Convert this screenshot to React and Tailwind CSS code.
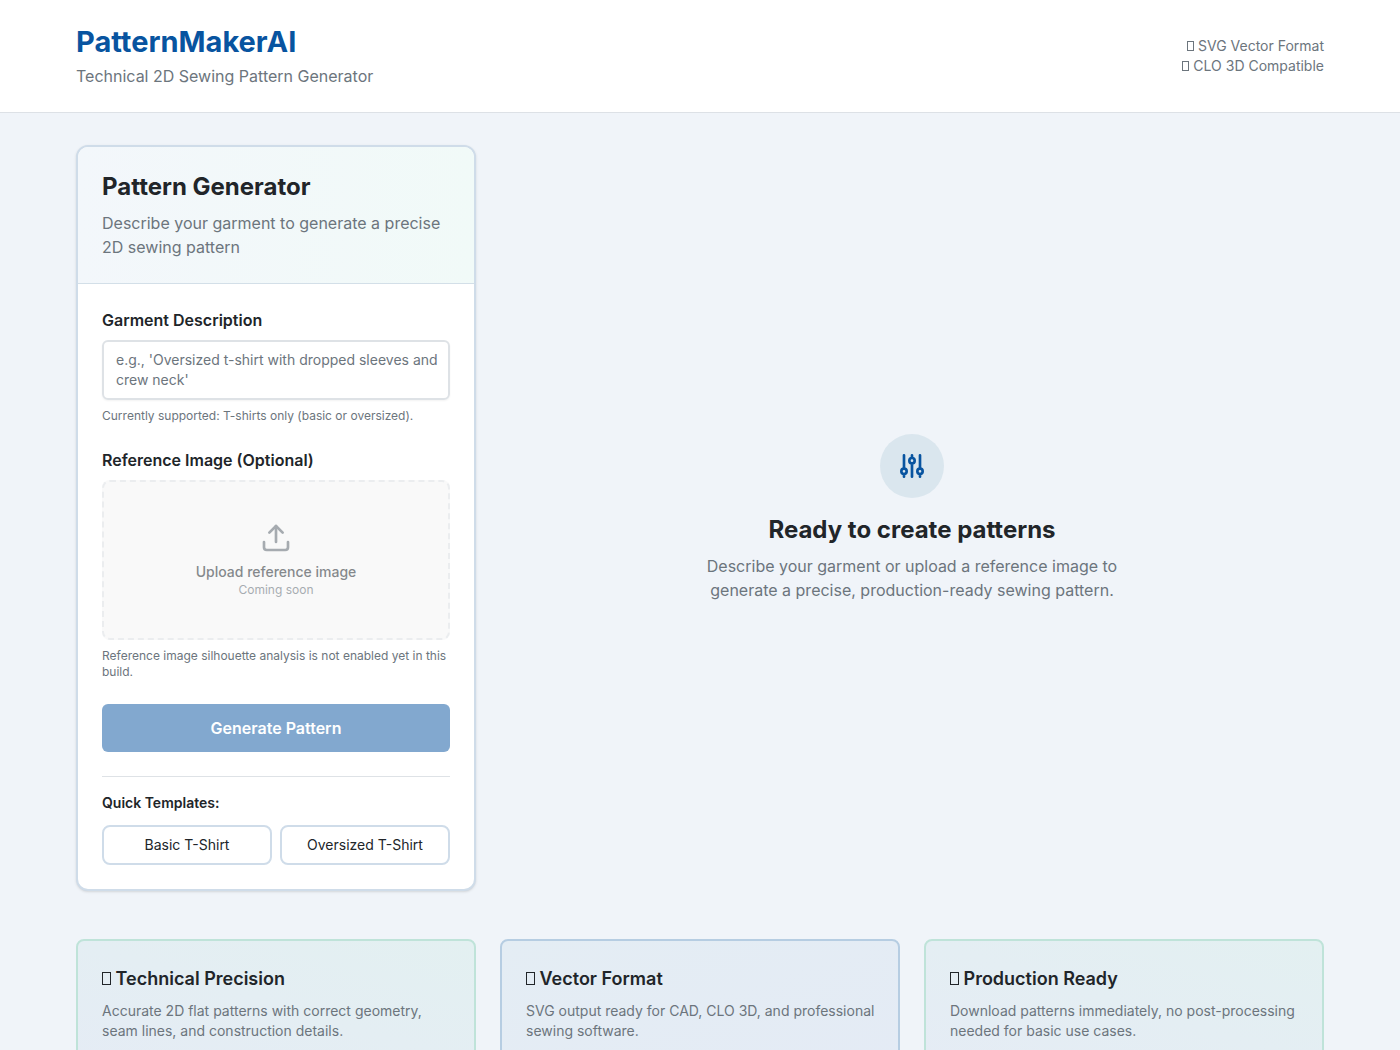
import React, { useState } from 'react';
import { Upload } from 'lucide-react';

const templates = [
  { name: 'Basic T-Shirt', prompt: 'Basic t-shirt with crew neck' },
  { name: 'Oversized T-Shirt', prompt: 'Oversized t-shirt with dropped sleeves and crew neck' },
];

const features = [
  {
    title: 'Technical Precision',
    text: 'Accurate 2D flat patterns with correct geometry, seam lines, and construction details.',
    style: 'border-[#bfe3d9] bg-linear-to-bl from-[#e3f0f1] to-[#e5ecf5]',
  },
  {
    title: 'Vector Format',
    text: 'SVG output ready for CAD, CLO 3D, and professional sewing software.',
    style: 'border-[#b6cde2] bg-linear-to-br from-[#e4edf4] to-[#e4ebf5]',
  },
  {
    title: 'Production Ready',
    text: 'Download patterns immediately, no post-processing needed for basic use cases.',
    style: 'border-[#bfe3d9] bg-linear-to-bl from-[#e3f0f1] to-[#e5ecf5]',
  },
];

// Small outlined box in front of a line of text
const Glyph = ({ className }) => (
  <span aria-hidden="true" className={`inline-block border border-current ${className}`}></span>
);

const SlidersIcon = () => (
  <svg
    className="w-8 h-8 text-[#0854a0]"
    fill="none"
    stroke="currentColor"
    strokeWidth="2"
    strokeLinecap="round"
    strokeLinejoin="round"
    viewBox="0 0 24 24"
    aria-hidden="true"
  >
    <path d="M12 6V4m0 2a2 2 0 100 4m0-4a2 2 0 110 4m-6 8a2 2 0 100-4m0 4a2 2 0 110-4m0 4v2m0-6V4m6 6v10m6-2a2 2 0 100-4m0 4a2 2 0 110-4m0 4v2m0-6V4" />
  </svg>
);

const Header = () => (
  <header className="bg-white border-b border-[#dde1e6]">
    <div className="max-w-7xl mx-auto px-4 py-6 flex items-center justify-between">
      <div>
        <h1 className="text-[29px] leading-9 font-bold text-[#0854a0]">PatternMakerAI</h1>
        <p className="mt-1 text-base">Technical 2D Sewing Pattern Generator</p>
      </div>
      <div className="text-sm text-right">
        <p><Glyph className="w-[7px] h-2.5" /> SVG Vector Format</p>
        <p><Glyph className="w-[7px] h-2.5" /> CLO 3D Compatible</p>
      </div>
    </div>
  </header>
);

const GeneratorForm = () => {
  const [description, setDescription] = useState('');

  const handleSubmit = (e) => {
    e.preventDefault();
  };

  return (
    <section className="bg-white border-2 border-[#cfdce9] rounded-xl shadow-sm overflow-hidden">
      <div className="p-6 border-b border-[#d3dfe8] bg-linear-to-r from-[#f3f7fb] to-[#f1faf8]">
        <h2 className="text-2xl font-bold text-[#212529]">Pattern Generator</h2>
        <p className="mt-2 text-base">Describe your garment to generate a precise 2D sewing pattern</p>
      </div>

      <form onSubmit={handleSubmit} className="p-6 space-y-6">
        {/* Garment description */}
        <div>
          <label htmlFor="description" className="block mb-2 text-base font-semibold text-[#212529]">
            Garment Description
          </label>
          <textarea
            id="description"
            rows="2"
            value={description}
            onChange={(e) => setDescription(e.target.value)}
            placeholder="e.g., 'Oversized t-shirt with dropped sleeves and crew neck'"
            className="block w-full pl-3 pr-1 py-2 text-sm text-[#212529] placeholder:text-[#6c757d] border-2 border-[#dee2e6] rounded-md shadow-xs resize-none"
          ></textarea>
          <p className="mt-2 text-xs">Currently supported: T-shirts only (basic or oversized).</p>
        </div>

        {/* Reference image */}
        <div>
          <label htmlFor="reference" className="block mb-2 text-base font-semibold text-[#212529]">
            Reference Image (Optional)
          </label>
          <input id="reference" type="file" disabled className="sr-only" />
          <div className="h-40 flex flex-col items-center justify-center border-2 border-dashed border-[#dee2e6] bg-[#f6f6f6] rounded-lg opacity-60">
            <Upload className="w-8 h-8 mb-2" />
            <span className="text-sm font-medium text-[#343a40]">Upload reference image</span>
            <span className="text-xs">Coming soon</span>
          </div>
          <p className="mt-2 text-xs">Reference image silhouette analysis is not enabled yet in this build.</p>
        </div>

        <button
          type="submit"
          disabled={!description.trim()}
          className="block w-full h-12 rounded-md bg-[#0854a0] text-base font-semibold text-white disabled:opacity-50"
        >
          Generate Pattern
        </button>

        {/* Quick templates */}
        <div className="border-t border-[#dee2e6] pt-4">
          <p className="mb-3 text-sm font-semibold text-[#212529]">Quick Templates:</p>
          <div className="grid grid-cols-2 gap-2">
            {templates.map((template) => (
              <button
                key={template.name}
                type="button"
                onClick={() => setDescription(template.prompt)}
                className="h-10 border-2 border-[#cfdce9] rounded-lg text-sm text-[#212529]"
              >
                {template.name}
              </button>
            ))}
          </div>
        </div>
      </form>
    </section>
  );
};

const EmptyState = () => (
  <section className="lg:col-span-2 flex flex-col items-center justify-center text-center">
    <div className="w-16 h-16 mb-4 rounded-full bg-[#dae6ee] flex items-center justify-center">
      <SlidersIcon />
    </div>
    <h2 className="text-2xl font-bold text-[#212529]">Ready to create patterns</h2>
    <p className="mt-2 max-w-md text-base">
      Describe your garment or upload a reference image to generate a precise, production-ready sewing pattern.
    </p>
  </section>
);

const App = () => {
  return (
    <div className="min-h-screen bg-[#f0f4f9] font-['Inter',sans-serif] text-[#6c757d]">
      <Header />

      <main className="max-w-7xl mx-auto px-4 py-8">
        <div className="grid lg:grid-cols-3 gap-6">
          <GeneratorForm />
          <EmptyState />
        </div>

        <div className="mt-12 grid md:grid-cols-3 gap-6">
          {features.map((feature) => (
            <div key={feature.title} className={`py-6 pl-6 pr-4 border-2 rounded-lg ${feature.style}`}>
              <h3 className="text-lg leading-7 font-semibold text-[#212529]">
                <Glyph className="w-[9px] h-[13px]" /> {feature.title}
              </h3>
              <p className="mt-2 text-sm">{feature.text}</p>
            </div>
          ))}
        </div>
      </main>
    </div>
  );
};

export default App;
